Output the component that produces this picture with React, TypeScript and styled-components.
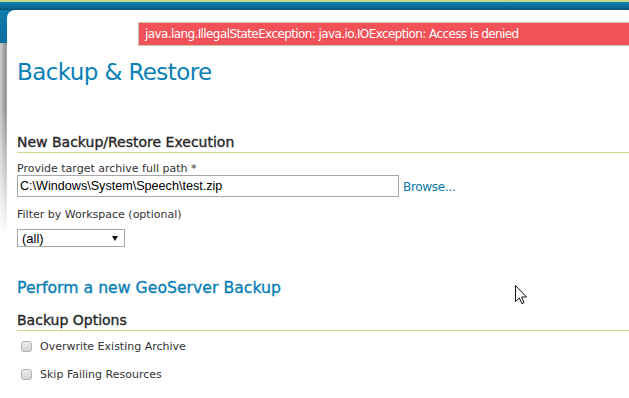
import React from 'react';
import styled, { createGlobalStyle } from 'styled-components';

const GlobalStyle = createGlobalStyle`
  html, body {
    margin: 0;
    padding: 0;
    background: #ffffff;
  }
  body {
    font-family: "DejaVu Sans", Verdana, sans-serif;
    color: #333333;
    overflow: hidden;
  }
`;

const Page = styled.div`
  position: relative;
  width: 629px;
  height: 398px;
  overflow: hidden;
  display: flex;
  flex-direction: column;
  background: #ffffff;
`;

const TopBand = styled.div`
  height: 8px;
  border-top: 2px solid #c4d88e;
  background: linear-gradient(to bottom, #1683b2 0%, #0b6d98 55%, #05547b 100%);
  flex: none;
`;

const Body = styled.div`
  flex: 1;
  display: flex;
  background: linear-gradient(to bottom, #0d74a3 0, #0a6994 33px, #ffffff 33px);
`;

// blue under the header, then a grey shadow strip that fades out
const Side = styled.div`
  width: 7px;
  flex: none;
  background:
    linear-gradient(to bottom, #0e7cae 0, #0b6f9e 33px, rgba(255, 255, 255, 0) 33px),
    linear-gradient(to bottom, rgba(255, 255, 255, 0) 0, rgba(255, 255, 255, 0) 100px, #ffffff 225px),
    linear-gradient(to right, #cfcfcf 0, #b0b0b0 3px, #8e8e8e 6px, #bdbdbd 7px);
`;

const Panel = styled.main`
  flex: 1;
  min-width: 0;
  background: #ffffff;
  border-top-left-radius: 8px;
  padding: 12px 0 0 10px;
`;

const ErrorBanner = styled.div`
  margin-left: 121px;
  margin-right: -4px;
  height: 22px;
  display: flex;
  align-items: center;
  padding-left: 6px;
  background: #f25157;
  border: 1px solid #c9c5ab;
  border-right: none;
  color: #ffffff;
  font-size: 12px;
  letter-spacing: -0.6px;
  white-space: nowrap;
`;

const PageTitle = styled.h1`
  margin: 12px 0 0;
  font-weight: normal;
  font-size: 23px;
  line-height: 28px;
  letter-spacing: -0.6px;
  color: #0a7fb7;
`;

const SectionTitle = styled.h2<{ $top: number }>`
  margin: ${(p) => p.$top}px 0 0;
  font-weight: normal;
  font-size: 14px;
  line-height: 17px;
  color: #262626;
  -webkit-text-stroke: 0.35px #262626;
  padding-bottom: 1px;
  border-bottom: 1px solid #c3df8f;
`;

const SubTitle = styled.h2`
  margin: 31px 0 0;
  font-weight: normal;
  font-size: 15.7px;
  line-height: 19px;
  color: #0a7fb7;
  -webkit-text-stroke: 0.35px #0a7fb7;
`;

const FieldLabel = styled.label<{ $top: number }>`
  display: block;
  margin-top: ${(p) => p.$top}px;
  font-size: 11px;
  line-height: 12px;
  color: #333333;
`;

const PathRow = styled.div`
  display: flex;
  align-items: center;
  gap: 4px;
`;

const PathInput = styled.input`
  box-sizing: border-box;
  width: 382px;
  height: 22px;
  margin: 0;
  padding: 0 2px;
  border: 1px solid #a8a8a8;
  font-family: "Liberation Sans", Arial, sans-serif;
  font-size: 12.6px;
  color: #000000;
  outline: none;
`;

const BrowseLink = styled.a`
  font-size: 12px;
  letter-spacing: -0.3px;
  color: #0a78aa;
  text-decoration: none;
  padding-top: 2px;
`;

const Select = styled.div`
  box-sizing: border-box;
  margin-top: 8px;
  width: 108px;
  height: 18px;
  border: 1px solid #a8a8a8;
  display: flex;
  align-items: center;
  justify-content: space-between;
  padding: 0 6px 0 4px;
  font-family: "Liberation Sans", Arial, sans-serif;
  font-size: 13px;
  color: #000000;
`;

const Caret = styled.span`
  width: 0;
  height: 0;
  border-left: 3px solid transparent;
  border-right: 3px solid transparent;
  border-top: 5px solid #111111;
`;

const OptionList = styled.div`
  display: flex;
  flex-direction: column;
  padding-top: 1px;
`;

const OptionRow = styled.label`
  height: 28px;
  display: flex;
  align-items: center;
  gap: 8px;
  padding-left: 4px;
  font-size: 11px;
  color: #333333;
`;

const Check = styled.span`
  box-sizing: border-box;
  width: 11px;
  height: 11px;
  border: 1px solid #b4b4b4;
  border-radius: 3px;
  background: linear-gradient(to bottom, #ececec, #d4d4d4);
`;

const Cursor = styled.svg`
  position: absolute;
  left: 515px;
  top: 285px;
`;

const options = ['Overwrite Existing Archive', 'Skip Failing Resources'];

export default function App() {
  return (
    <Page>
      <GlobalStyle />
      <TopBand />
      <Body>
        <Side />
        <Panel>
          <ErrorBanner>java.lang.IllegalStateException: java.io.IOException: Access is denied</ErrorBanner>
          <PageTitle>Backup &amp; Restore</PageTitle>

          <SectionTitle $top={48}>New Backup/Restore Execution</SectionTitle>
          <FieldLabel $top={10}>Provide target archive full path *</FieldLabel>
          <PathRow>
            <PathInput readOnly value="C:\Windows\System\Speech\test.zip" />
            <BrowseLink href="#">Browse...</BrowseLink>
          </PathRow>
          <FieldLabel $top={12}>Filter by Workspace (optional)</FieldLabel>
          <Select>
            <span>(all)</span>
            <Caret />
          </Select>

          <SubTitle>Perform a new GeoServer Backup</SubTitle>
          <SectionTitle $top={15}>Backup Options</SectionTitle>
          <OptionList>
            {options.map((o) => (
              <OptionRow key={o}>
                <Check />
                {o}
              </OptionRow>
            ))}
          </OptionList>
        </Panel>
      </Body>
      <Cursor width="13" height="20" viewBox="0 0 13 20">
        <path
          d="M0.5 0.5 L0.5 16.5 L4.3 12.9 L6.8 18.6 L9 17.6 L6.6 12 L11.5 12 Z"
          fill="#ffffff"
          stroke="#111111"
          strokeWidth="1"
          strokeLinejoin="miter"
        />
      </Cursor>
    </Page>
  );
}
